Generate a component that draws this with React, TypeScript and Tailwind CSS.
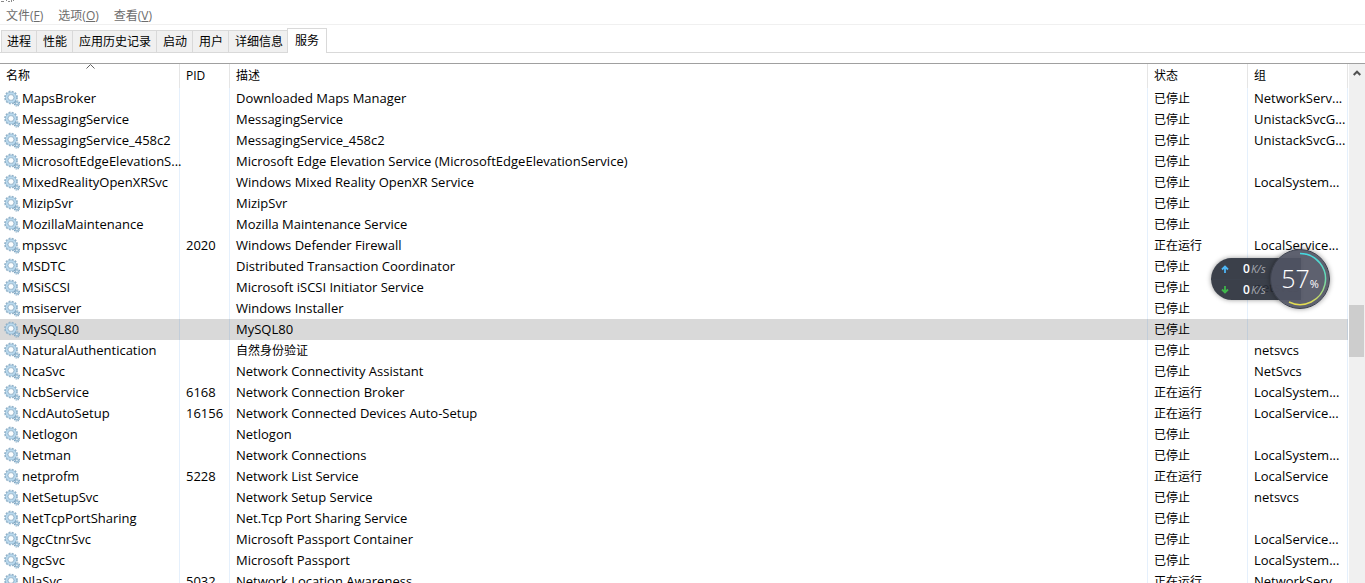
import React from 'react';

type Service = { name: string; pid?: string; desc: string; running?: boolean; group?: string };

const services: Service[] = [
  { name: 'MapsBroker', desc: 'Downloaded Maps Manager', group: 'NetworkServ...' },
  { name: 'MessagingService', desc: 'MessagingService', group: 'UnistackSvcG...' },
  { name: 'MessagingService_458c2', desc: 'MessagingService_458c2', group: 'UnistackSvcG...' },
  { name: 'MicrosoftEdgeElevationS...', desc: 'Microsoft Edge Elevation Service (MicrosoftEdgeElevationService)' },
  { name: 'MixedRealityOpenXRSvc', desc: 'Windows Mixed Reality OpenXR Service', group: 'LocalSystem...' },
  { name: 'MizipSvr', desc: 'MizipSvr' },
  { name: 'MozillaMaintenance', desc: 'Mozilla Maintenance Service' },
  { name: 'mpssvc', pid: '2020', desc: 'Windows Defender Firewall', running: true, group: 'LocalService...' },
  { name: 'MSDTC', desc: 'Distributed Transaction Coordinator' },
  { name: 'MSiSCSI', desc: 'Microsoft iSCSI Initiator Service', group: 'netsvcs' },
  { name: 'msiserver', desc: 'Windows Installer' },
  { name: 'MySQL80', desc: 'MySQL80' },
  { name: 'NaturalAuthentication', desc: '自然身份验证', group: 'netsvcs' },
  { name: 'NcaSvc', desc: 'Network Connectivity Assistant', group: 'NetSvcs' },
  { name: 'NcbService', pid: '6168', desc: 'Network Connection Broker', running: true, group: 'LocalSystem...' },
  { name: 'NcdAutoSetup', pid: '16156', desc: 'Network Connected Devices Auto-Setup', running: true, group: 'LocalService...' },
  { name: 'Netlogon', desc: 'Netlogon' },
  { name: 'Netman', desc: 'Network Connections', group: 'LocalSystem...' },
  { name: 'netprofm', pid: '5228', desc: 'Network List Service', running: true, group: 'LocalService' },
  { name: 'NetSetupSvc', desc: 'Network Setup Service', group: 'netsvcs' },
  { name: 'NetTcpPortSharing', desc: 'Net.Tcp Port Sharing Service' },
  { name: 'NgcCtnrSvc', desc: 'Microsoft Passport Container', group: 'LocalService...' },
  { name: 'NgcSvc', desc: 'Microsoft Passport', group: 'LocalSystem...' },
  { name: 'NlaSvc', pid: '5032', desc: 'Network Location Awareness', running: true, group: 'NetworkServ...' },
];

const menus = [
  { label: '文件', key: 'F' },
  { label: '选项', key: 'O' },
  { label: '查看', key: 'V' },
];

const tabs = ['进程', '性能', '应用历史记录', '启动', '用户', '详细信息'];

function GearIcon() {
  return (
    <svg viewBox="0 0 16 17" className="h-[17px] w-4 shrink-0" aria-hidden="true">
      <circle cx="7" cy="7.500" r="6" fill="none" stroke="#93b3ca" strokeWidth="1.8" strokeDasharray="1.9 1.24" />
      <circle cx="7" cy="7.500" r="4.300" fill="none" stroke="#8db0c9" strokeWidth="2.800" />
      <circle cx="7" cy="7.500" r="4.300" fill="none" stroke="#b9d9ee" strokeWidth="1.900" />
      <circle cx="7" cy="7.500" r="2.900" fill="#fbfdfe" stroke="#86a9c3" strokeWidth="0.700" />
      <circle cx="12.900" cy="13.400" r="2.600" fill="none" stroke="#7fa4bf" strokeWidth="1.200" strokeDasharray="1.2 0.84" />
      <circle cx="12.900" cy="13.400" r="1.500" fill="#edf6fb" stroke="#93b8d1" strokeWidth="1.400" />
    </svg>
  );
}

function SpeedWidget() {
  return (
    <aside className="absolute top-[249px] right-[35px] flex h-[60px] w-[119px] items-center" aria-label="网速">
      <div className="flex h-[42px] w-[90px] flex-col overflow-hidden rounded-l-full bg-[#2a303b]/92 text-white shadow-[0_0_5px_rgba(0,0,0,0.4)]">
        {[
          { id: 'up', color: '#4db5f5', d: 'M4 8V1.5M1 4.5l3-3 3 3' },
          { id: 'down', color: '#3fb54a', d: 'M4 0v6.5M1 3.5l3 3 3-3' },
        ].map((r) => (
          <div key={r.id} className="flex h-[21px] items-center border-t border-[#3c424d] pl-[10px]">
            <svg viewBox="0 0 8 8" className="h-2 w-2" fill="none" stroke={r.color} strokeWidth="1.8" aria-hidden="true">
              <path d={r.d} />
            </svg>
            <span className="ml-[14px] text-[12px] font-semibold">0</span>
            <span className="ml-px text-[11px] text-[#a5a8b0] italic">K/s</span>
          </div>
        ))}
      </div>
      <div className="absolute right-0 flex h-[60px] w-[60px] items-center justify-center rounded-full border border-[#3c414d] bg-[#505463]/92 text-white shadow-[0_0_5px_rgba(0,0,0,0.4)]">
        <svg viewBox="0 0 60 60" className="absolute -inset-px h-[60px] w-[60px]" fill="none" strokeWidth="1.5" aria-hidden="true">
          <defs>
            <linearGradient id="ring" x1="0" y1="0" x2="0" y2="1">
              <stop offset="0" stopColor="#45d8e0" />
              <stop offset="0.5" stopColor="#6adbb0" />
              <stop offset="1" stopColor="#e6dc50" />
            </linearGradient>
          </defs>
          <path d="M30 4.500A25.500 25.500 0 1 1 19 53" stroke="url(#ring)" />
        </svg>
        <span className="text-[25px] font-light">57</span>
        <span className="mt-[10px] text-[11px]">%</span>
      </div>
    </aside>
  );
}

const th = 'border-r border-[#e5e5e5] px-[6px] text-left font-normal';
const td = 'border-r border-[#0070e0]/10 px-[6px] py-0 whitespace-nowrap';
const latin = 'align-top text-[13px] leading-[21px]';
const cjk = 'align-top text-[12px] leading-[21px]';

export default function App() {
  return (
    <div className="relative flex h-screen flex-col overflow-hidden bg-white font-['Open_Sans','Noto_Sans_CJK_SC',sans-serif] text-[12px] text-black">
      <svg viewBox="0 0 16 2" className="h-[2px] w-4 shrink-0" fill="#8a8a8a" aria-hidden="true">
        <path d="M1 1h3v1H1zM6 0h1v1H6zM8 1h2v1H8zM11 0h1v2h-1zM13 0h1v1h-1z" />
      </svg>
      <nav className="flex h-[23px] shrink-0 items-end gap-[15px] border-b border-[#f0f0f0] pl-[6px] text-[#6d6d6d]">
        {menus.map((m) => (
          <button key={m.key} type="button" className="leading-[16px]">
            {m.label}(<u>{m.key}</u>)
          </button>
        ))}
      </nav>

      <div role="tablist" className="mt-[3px] flex h-[25px] shrink-0 items-end">
        <span className="h-px w-px bg-[#d9d9d9]" />
        {tabs.map((t) => (
          <button
            key={t}
            role="tab"
            type="button"
            className="h-[23px] border border-r-0 border-[#d9d9d9] bg-[#f0f0f0] px-[5px] leading-[21px] not-nth-2:pl-[6px]"
          >
            {t}
          </button>
        ))}
        <button role="tab" type="button" aria-selected="true" className="-ml-px h-[25px] w-[40px] border border-b-0 border-[#d9d9d9] bg-white leading-[22px]">
          服务
        </button>
        <span className="h-px grow bg-[#d9d9d9]" />
      </div>

      <main className="mt-[10px] flex min-h-0 grow border-t border-[#a0a0a0]">
        <div className="min-w-0 grow overflow-hidden">
          <table className="w-full table-fixed border-separate border-spacing-0">
            <colgroup>
              <col className="w-[180px]" />
              <col className="w-[50px]" />
              <col />
              <col className="w-[100px]" />
              <col className="w-[100px]" />
            </colgroup>
            <thead>
              <tr className="h-6">
                <th className={`${th} relative`}>
                  名称
                  <svg viewBox="0 0 9 5" className="absolute top-0 left-[86px] h-[5px] w-[9px]" fill="none" stroke="#606060" aria-hidden="true">
                    <path d="M.5 4.500l4-4 4 4" />
                  </svg>
                </th>
                <th className={th}>PID</th>
                <th className={th}>描述</th>
                <th className={th}>状态</th>
                <th className={th}>组</th>
              </tr>
            </thead>
            <tbody>
              {services.map((s) => (
                <tr key={s.name} className={s.name === 'MySQL80' ? 'h-[21px] bg-[#d9d9d9]' : 'h-[21px]'}>
                  <td className={`border-r border-[#0070e0]/10 py-0 pl-1 whitespace-nowrap ${latin}`}>
                    <div className="flex items-center gap-[2px]">
                      <GearIcon />
                      {s.name}
                    </div>
                  </td>
                  <td className={`${td} ${latin}`}>{s.pid}</td>
                  <td className={`${td} ${s.desc === '自然身份验证' ? cjk : latin}`}>{s.desc}</td>
                  <td className={`${td} ${cjk}`}>{s.running ? '正在运行' : '已停止'}</td>
                  <td className={`${td} ${latin}`}>{s.group}</td>
                </tr>
              ))}
            </tbody>
          </table>
        </div>
        <div className="ml-px flex w-4 shrink-0 flex-col bg-[#f0f0f0]">
          <button type="button" aria-label="向上滚动" className="flex h-[17px] shrink-0 items-center justify-center">
            <svg viewBox="0 0 8 6" className="h-[6px] w-2" fill="none" stroke="#505050" strokeWidth="2" aria-hidden="true">
              <path d="M.7 5L4 1.700 7.300 5" />
            </svg>
          </button>
          <div className="mt-[224px] mr-px h-[52px] shrink-0 bg-[#cdcdcd]" />
        </div>
      </main>
      <SpeedWidget />
    </div>
  );
}
